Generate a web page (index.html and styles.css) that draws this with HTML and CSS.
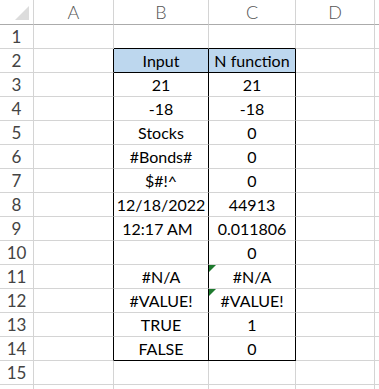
FILE: index.html
```html
<!DOCTYPE html>
<html>
<head>
<meta charset="utf-8">
<link rel="stylesheet" href="styles.css">
</head>
<body>
<div class="sheet">
  <div class="corner hdr"><span class="tri"></span></div>
  <div class="colh hdr">A</div>
  <div class="colh hdr">B</div>
  <div class="colh hdr">C</div>
  <div class="colh hdr">D</div>
  <div class="colh hdr last"></div>

  <div class="rowh">1</div><div class="c"></div><div class="c bb"></div><div class="c bb"></div><div class="c"></div><div class="c"></div>
  <div class="rowh">2</div><div class="c br"></div><div class="c br bb head">Input</div><div class="c br bb head">N function</div><div class="c"></div><div class="c"></div>
  <div class="rowh">3</div><div class="c br"></div><div class="c br">21</div><div class="c br">21</div><div class="c"></div><div class="c"></div>
  <div class="rowh">4</div><div class="c br"></div><div class="c br">-18</div><div class="c br">-18</div><div class="c"></div><div class="c"></div>
  <div class="rowh">5</div><div class="c br"></div><div class="c br">Stocks</div><div class="c br">0</div><div class="c"></div><div class="c"></div>
  <div class="rowh">6</div><div class="c br"></div><div class="c br">#Bonds#</div><div class="c br">0</div><div class="c"></div><div class="c"></div>
  <div class="rowh">7</div><div class="c br"></div><div class="c br">$#!^</div><div class="c br">0</div><div class="c"></div><div class="c"></div>
  <div class="rowh">8</div><div class="c br"></div><div class="c br">12/18/2022</div><div class="c br">44913</div><div class="c"></div><div class="c"></div>
  <div class="rowh">9</div><div class="c br"></div><div class="c br right">12:17 AM</div><div class="c br">0.011806</div><div class="c"></div><div class="c"></div>
  <div class="rowh">10</div><div class="c br"></div><div class="c br"></div><div class="c br">0</div><div class="c"></div><div class="c"></div>
  <div class="rowh">11</div><div class="c br"></div><div class="c br">#N/A</div><div class="c br flag">#N/A</div><div class="c"></div><div class="c"></div>
  <div class="rowh">12</div><div class="c br"></div><div class="c br">#VALUE!</div><div class="c br flag">#VALUE!</div><div class="c"></div><div class="c"></div>
  <div class="rowh">13</div><div class="c br"></div><div class="c br">TRUE</div><div class="c br">1</div><div class="c"></div><div class="c"></div>
  <div class="rowh">14</div><div class="c br"></div><div class="c br bb">FALSE</div><div class="c br bb">0</div><div class="c"></div><div class="c"></div>
  <div class="rowh">15</div><div class="c"></div><div class="c"></div><div class="c"></div><div class="c"></div><div class="c"></div>
  <div class="rowh"></div><div class="c"></div><div class="c"></div><div class="c"></div><div class="c"></div><div class="c"></div>
</div>
</body>
</html>
```
FILE: styles.css
```css
html, body {
  margin: 0;
  padding: 0;
  background: #fff;
  overflow: hidden;
}
.sheet {
  display: grid;
  grid-template-columns: 34px 80px 95px 87px 79px 20px;
  grid-template-rows: 25px repeat(16, 24px);
  font-family: "Lato", "Open Sans", sans-serif;
  font-size: 16px;
  color: #000;
}
.sheet > div {
  box-sizing: border-box;
  border-right: 1px solid #d4d4d4;
  border-bottom: 1px solid #d4d4d4;
  display: flex;
  align-items: center;
  justify-content: center;
  white-space: nowrap;
  overflow: visible;
  position: relative;
}
.hdr {
  background: #fff;
  border-bottom-color: #ababab !important;
}
.colh {
  color: #555;
  font-size: 18px;
  font-weight: 300;
}
.corner {
  justify-content: flex-end;
  align-items: flex-end;
}
.tri {
  position: absolute;
  right: 4px;
  bottom: 4px;
  width: 0;
  height: 0;
  border-left: 14px solid transparent;
  border-bottom: 14px solid #dcdcdc;
}
.rowh {
  color: #444;
  font-size: 17px;
  font-weight: 400;
}
.sheet > .br {
  border-right-color: #000;
}
.sheet > .bb {
  border-bottom-color: #000;
}
.head {
  background: #bdd7ee;
}
.right {
  justify-content: flex-end;
  padding-right: 7px;
}
.flag::before {
  content: "";
  position: absolute;
  left: 0;
  top: 0;
  width: 0;
  height: 0;
  border-top: 7px solid #1e7a2e;
  border-right: 7px solid transparent;
}
```
